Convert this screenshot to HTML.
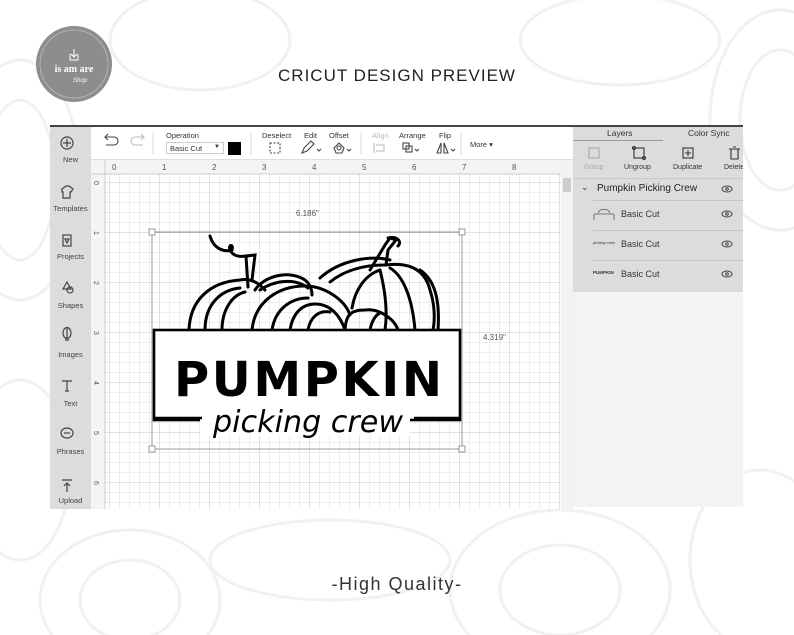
<!DOCTYPE html>
<html><head><meta charset="utf-8"><style>
*{margin:0;padding:0;box-sizing:border-box}
html,body{width:794px;height:635px;overflow:hidden}
body{background:#fff;position:relative;font-family:"Liberation Sans",sans-serif;color:#333}
.abs{position:absolute}
.sb{font-size:7.5px;color:#444;text-align:center;width:41px;left:50px}
.tb{font-size:7.5px;color:#333}
.lay{font-size:9px;color:#333}
</style></head><body>
<svg class="abs" style="left:0;top:0" width="794" height="635">
<g fill="none" stroke="#f1f1f1" stroke-width="3">
<ellipse cx="20" cy="180" rx="60" ry="120"/><ellipse cx="20" cy="180" rx="35" ry="80"/>
<ellipse cx="780" cy="120" rx="70" ry="110"/><ellipse cx="780" cy="120" rx="40" ry="70"/>
<ellipse cx="130" cy="600" rx="90" ry="70"/><ellipse cx="130" cy="600" rx="50" ry="40"/>
<ellipse cx="560" cy="590" rx="110" ry="80"/><ellipse cx="560" cy="590" rx="60" ry="45"/>
<ellipse cx="330" cy="560" rx="120" ry="40"/><ellipse cx="760" cy="560" rx="70" ry="90"/>
<ellipse cx="200" cy="40" rx="90" ry="50"/><ellipse cx="620" cy="40" rx="100" ry="45"/>
<ellipse cx="20" cy="470" rx="50" ry="90"/>
</g>
<circle cx="74" cy="64" r="38" fill="#8d8d8d"/>
<circle cx="74" cy="64" r="34" fill="none" stroke="#bbb" stroke-width="0.8"/>
<path d="M70 54v6h8v-6M74 49v8M71 54l3 3 3-3" fill="none" stroke="#fff" stroke-width="1"/>
<text x="74" y="72" font-size="10" font-weight="bold" fill="#fff" text-anchor="middle" font-family="Liberation Serif">is am are</text>
<text x="80" y="82" font-size="6" fill="#fff" font-style="italic" text-anchor="middle">Shop</text>
</svg>
<div class="abs" style="left:0;width:794px;top:66px;text-align:center;font-size:17px;letter-spacing:1px;color:#222">CRICUT DESIGN PREVIEW</div>
<div class="abs" style="left:0;width:794px;top:574px;text-align:center;font-size:18px;letter-spacing:1.5px;color:#333">-High Quality-</div>

<div class="abs" style="left:50px;top:125px;width:693px;height:2px;background:#444"></div>
<div class="abs" style="left:50px;top:127px;width:41px;height:382px;background:#dcdcdc"></div>
<div class="abs" style="left:91px;top:127px;width:482px;height:33px;background:#fff;border-bottom:1px solid #ddd"></div>
<svg class="abs" style="left:91px;top:160px" width="482" height="349">
<defs>
<pattern id="mn" width="10" height="10" patternUnits="userSpaceOnUse" x="-1" y="-7"><path d="M10 0V10M0 10H10" stroke="#dcdcdc" stroke-width="1" fill="none"/></pattern>
<pattern id="mj" width="50" height="50" patternUnits="userSpaceOnUse" x="-31" y="-27"><path d="M50 0V50M0 50H50" stroke="#c4c4c4" stroke-width="1" fill="none"/></pattern>
</defs>
<rect x="14" y="14" width="456" height="335" fill="#fff"/>
<rect x="14" y="14" width="456" height="335" fill="url(#mn)"/>
<rect x="14" y="14" width="456" height="335" fill="url(#mj)"/>
<rect x="0" y="0" width="470" height="14" fill="#f4f4f4"/>
<rect x="0" y="0" width="14" height="349" fill="#f4f4f4"/>
<line x1="0" y1="14" x2="470" y2="14" stroke="#ccc"/>
<line x1="14" y1="0" x2="14" y2="349" stroke="#ccc"/>
<rect x="470" y="0" width="12" height="349" fill="#f2f2f2"/>
<rect x="472" y="18" width="8" height="14" fill="#ccc"/>
<g font-size="8" fill="#555">
<text x="21" y="10">0</text><text x="71" y="10">1</text><text x="121" y="10">2</text><text x="171" y="10">3</text><text x="221" y="10">4</text><text x="271" y="10">5</text><text x="321" y="10">6</text><text x="371" y="10">7</text><text x="421" y="10">8</text>
</g>
<g font-size="7" fill="#555">
<text transform="translate(3,21) rotate(90)">0</text><text transform="translate(3,71) rotate(90)">1</text><text transform="translate(3,121) rotate(90)">2</text><text transform="translate(3,171) rotate(90)">3</text><text transform="translate(3,221) rotate(90)">4</text><text transform="translate(3,271) rotate(90)">5</text><text transform="translate(3,321) rotate(90)">6</text>
</g>
</svg>

<svg class="abs" style="left:140px;top:220px" width="340" height="240">
<rect x="12" y="12" width="310" height="217" fill="none" stroke="#999" stroke-width="1"/>
<g fill="#fff" stroke="#999"><rect x="9" y="9" width="6" height="6"/><rect x="319" y="9" width="6" height="6"/><rect x="9" y="226" width="6" height="6"/><rect x="319" y="226" width="6" height="6"/></g>
<g fill="none" stroke="#000" stroke-width="3" stroke-linecap="round">
<path d="M49 110C50 80 70 62 100 60C110 58 118 62 125 70"/>
<path d="M65 110C65 85 80 70 100 68"/>
<path d="M82 110C82 90 92 75 105 72"/>
<path d="M115 70C125 55 150 50 165 60C170 64 172 70 172 75"/>
<path d="M120 70C135 60 155 58 168 68"/>
<path d="M108 67L106 36L115 35L112 60"/>
<path d="M70 16C74 30 85 32 92 30C94 24 88 24 90 30C95 40 108 35 108 36"/>
<path d="M112 110C115 80 140 66 165 66C185 66 205 80 210 95"/>
<path d="M132 110C135 90 150 78 168 78"/>
<path d="M150 110C153 92 163 84 175 84C190 84 200 95 205 110"/>
<path d="M168 110C170 98 178 90 190 92"/>
<path d="M205 110C206 95 210 90 225 90C240 88 255 100 258 110"/>
<path d="M230 110C232 100 236 95 240 93"/>
<path d="M180 58C200 40 230 35 250 40"/>
<path d="M190 62C205 50 225 45 245 45"/>
<path d="M212 88C215 70 225 55 240 50"/>
<path d="M230 50L245 25L250 18L256 20L248 30L246 45"/>
<path d="M248 18C258 16 262 22 258 26"/>
<path d="M246 45C270 42 285 50 290 70C295 85 295 100 293 110"/>
<path d="M250 48C262 55 272 75 275 110"/>
<path d="M240 50C245 70 248 90 245 110"/>
<path d="M280 50C295 60 300 80 298 110"/>
</g>
<rect x="14" y="110" width="306" height="90" fill="#fff" stroke="#000" stroke-width="2.6"/>
<text x="168" y="176" font-size="48" font-weight="bold" text-anchor="middle" font-family="DejaVu Sans" fill="#000" textLength="268" lengthAdjust="spacing">PUMPKIN</text>
<rect x="60" y="186" width="210" height="30" fill="#fff"/>
<text x="168" y="212" font-size="30" text-anchor="middle" font-style="italic" font-family="DejaVu Sans" fill="#000" textLength="190" lengthAdjust="spacingAndGlyphs">picking crew</text>
<path d="M14 198H62M274 198H320" stroke="#000" stroke-width="2.6"/>
</svg>
<div class="abs" style="left:296px;top:209px;font-size:8px;color:#555">6.186"</div>
<div class="abs" style="left:483px;top:333px;font-size:8px;color:#555">4.319"</div>

<svg class="abs" style="left:50px;top:127px" width="41" height="382" fill="none" stroke="#444" stroke-width="1.2">
<circle cx="17" cy="16" r="6"/><path d="M17 12v8M13 16h8"/>
<path d="M12 62l4-3h3l4 3-2 3h-1v6h-7v-6h-1z"/>
<rect x="13" y="108" width="8" height="11"/><path d="M15 112h4l-2 4z"/>
<path d="M17 155l-4 7h8z"/><circle cx="20" cy="163" r="3"/>
<ellipse cx="17" cy="206" rx="4" ry="5.5"/><path d="M17 201v11M15 213h4"/>
<path d="M12 254h10M17 254v10M15 264h4"/>
<ellipse cx="17" cy="306" rx="6" ry="5"/><path d="M14 306h6"/>
<path d="M12 353h10M17 365v-9M14 359l3-3 3 3"/>
</svg>
<div class="abs sb" style="top:155px">New</div>
<div class="abs sb" style="top:204px">Templates</div>
<div class="abs sb" style="top:252px">Projects</div>
<div class="abs sb" style="top:301px">Shapes</div>
<div class="abs sb" style="top:350px">Images</div>
<div class="abs sb" style="top:399px">Text</div>
<div class="abs sb" style="top:447px">Phrases</div>
<div class="abs sb" style="top:496px">Upload</div>

<div class="abs tb" style="left:166px;top:131px">Operation</div>
<div class="abs" style="left:166px;top:142px;width:58px;height:12px;border:1px solid #ccc;font-size:7.5px;padding:1px 3px">Basic Cut <span style="float:right;font-size:6px">▼</span></div>
<div class="abs" style="left:228px;top:142px;width:13px;height:13px;background:#000"></div>
<div class="abs tb" style="left:262px;top:131px">Deselect</div>
<div class="abs tb" style="left:304px;top:131px">Edit</div>
<div class="abs tb" style="left:329px;top:131px">Offset</div>
<div class="abs tb" style="left:372px;top:131px;color:#bbb">Align</div>
<div class="abs tb" style="left:399px;top:131px">Arrange</div>
<div class="abs tb" style="left:439px;top:131px">Flip</div>
<div class="abs tb" style="left:470px;top:140px">More ▾</div>
<svg class="abs" style="left:91px;top:127px" width="482" height="33" fill="none" stroke="#444" stroke-width="1.1">
<path d="M15 18h8a4 4 0 0 0 0-8h-9M17 7l-3 3 3 3"/>
<path stroke="#bbb" d="M52 18h-8a4 4 0 0 1 0-8h9M50 7l3 3-3 3"/>
<line x1="62" y1="5" x2="62" y2="28" stroke="#ddd"/>
<line x1="160" y1="5" x2="160" y2="28" stroke="#ddd"/>
<rect x="179" y="16" width="10" height="10" stroke-dasharray="2 1.5"/>
<path d="M211 26l2-5 7-7 3 3-7 7z"/><path d="M226 22l2 2 2-2" />
<path d="M243 21l5-5 5 5-2 5h-6z"/><circle cx="248" cy="21" r="2"/><path d="M256 22l2 2 2-2"/>
<line x1="270" y1="5" x2="270" y2="28" stroke="#ddd"/>
<path stroke="#bbb" d="M283 16v10M285 18h8v6h-8"/>
<rect x="312" y="16" width="6" height="6"/><rect x="315" y="19" width="6" height="6"/><path d="M324 22l2 2 2-2"/>
<path d="M350 16l-4 10h4zM353 16l4 10h-4z"/><path d="M360 22l2 2 2-2"/>
<line x1="370" y1="5" x2="370" y2="28" stroke="#ddd"/>
</svg>

<div class="abs" style="left:573px;top:127px;width:170px;height:165px;background:#dcdcdc"></div>
<div class="abs" style="left:573px;top:292px;width:170px;height:215px;background:#f3f3f3"></div>
<div class="abs" style="left:573px;top:140px;width:90px;height:1px;background:#999"></div>
<div class="abs lay" style="left:607px;top:128px;font-size:8.5px">Layers</div>
<div class="abs lay" style="left:688px;top:128px;font-size:8.5px">Color Sync</div>
<svg class="abs" style="left:573px;top:141px" width="170" height="30" fill="none" stroke="#333" stroke-width="1.1">
<rect x="16" y="7" width="10" height="10" stroke="#aaa"/>
<rect x="61" y="7" width="10" height="10"/><circle cx="61" cy="7" r="1.5"/><circle cx="71" cy="17" r="1.5"/>
<rect x="110" y="7" width="10" height="10"/><path d="M115 9v6M112 12h6"/>
<path d="M156 8h11M158 8v10h7v-10M160 6h3"/>
</svg>
<div class="abs" style="left:584px;top:164px;font-size:7px;color:#aaa">Group</div>
<div class="abs" style="left:624px;top:164px;font-size:7px">Ungroup</div>
<div class="abs" style="left:673px;top:164px;font-size:7px">Duplicate</div>
<div class="abs" style="left:724px;top:164px;font-size:7px;width:19px;overflow:hidden;white-space:nowrap">Delete</div>
<div class="abs" style="left:573px;top:178px;width:170px;height:1px;background:#c8c8c8"></div>
<div class="abs" style="left:581px;top:182px;font-size:9px">⌄</div>
<div class="abs" style="left:597px;top:183px;font-size:10px;color:#222">Pumpkin Picking Crew</div>
<div class="abs" style="left:593px;top:200px;width:150px;height:1px;background:#c4c4c4"></div>
<div class="abs" style="left:593px;top:230px;width:150px;height:1px;background:#c4c4c4"></div>
<div class="abs" style="left:593px;top:260px;width:150px;height:1px;background:#c4c4c4"></div>
<div class="abs lay" style="left:621px;top:209px">Basic Cut</div>
<div class="abs lay" style="left:621px;top:239px">Basic Cut</div>
<div class="abs lay" style="left:621px;top:269px">Basic Cut</div>
<div class="abs" style="left:593px;top:240px;font-size:4px;font-style:italic">picking crew</div>
<div class="abs" style="left:593px;top:270px;font-size:4.5px;font-weight:bold">PUMPKIN</div>
<svg class="abs" style="left:593px;top:205px" width="22" height="16" fill="none" stroke="#555" stroke-width="0.8"><path d="M5 8c2-5 10-5 12 0M1 9h20M1 9v6M21 9v6"/></svg>
<svg class="abs" style="left:720px;top:183px" width="14" height="100" fill="none" stroke="#444" stroke-width="1">
<g><ellipse cx="7" cy="6" rx="5" ry="3"/><circle cx="7" cy="6" r="1.3"/></g>
<g transform="translate(0,25)"><ellipse cx="7" cy="6" rx="5" ry="3"/><circle cx="7" cy="6" r="1.3"/></g>
<g transform="translate(0,55)"><ellipse cx="7" cy="6" rx="5" ry="3"/><circle cx="7" cy="6" r="1.3"/></g>
<g transform="translate(0,85)"><ellipse cx="7" cy="6" rx="5" ry="3"/><circle cx="7" cy="6" r="1.3"/></g>
</svg>
</body></html>
